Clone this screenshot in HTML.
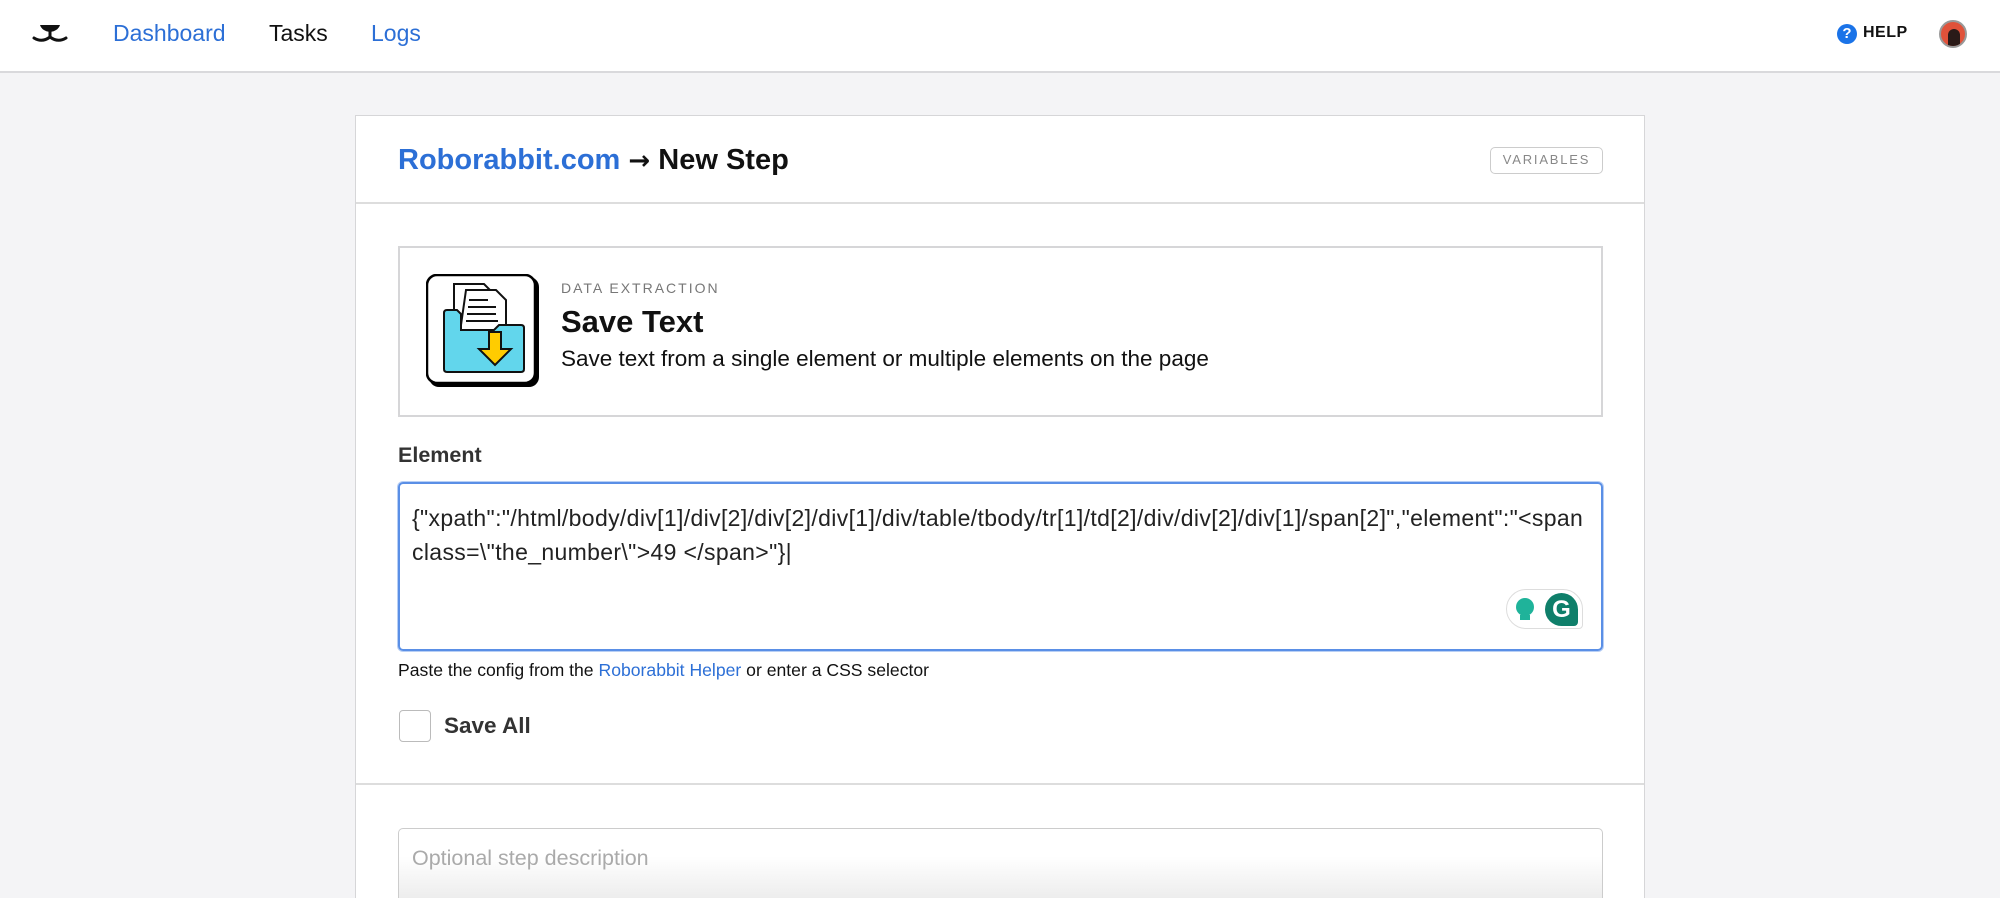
<!DOCTYPE html>
<html style="overflow:hidden;height:898px"><head><meta charset="utf-8"><style>
*{box-sizing:border-box;margin:0;padding:0}
body{width:2000px;height:898px;overflow:hidden;background:#f4f4f6;font-family:"Liberation Sans",sans-serif;color:#111}
#wrap{position:relative;width:2000px;height:898px;overflow:hidden}
.abs{position:absolute;white-space:nowrap}
.top{position:absolute;left:0;top:0;width:2000px;height:73px;background:#fff;border-bottom:2px solid #d9d9dc}
.card{position:absolute;left:355px;top:115px;width:1290px;height:783px;background:#fff;border:1.5px solid #d6d6d8;border-bottom:none;overflow:hidden}
</style></head><body><div id="wrap">
<div class="top">
<svg class="abs" style="left:31px;top:23px" width="38" height="24" viewBox="0 0 38 24"><path d="M9 2 h20 q-2 6 -10 7 q-8 -1 -10 -7z" fill="#111"/><path d="M19 8 v6 q-8 6 -16 1 M19 14 q8 6 16 1" fill="none" stroke="#111" stroke-width="3" stroke-linecap="round"/></svg>
<div class="abs" style="left:113px;top:20px;font-size:23px;color:#2c6fd6">Dashboard</div>
<div class="abs" style="left:269px;top:20px;font-size:23px;color:#111">Tasks</div>
<div class="abs" style="left:371px;top:20px;font-size:23px;color:#2c6fd6">Logs</div>
<div class="abs" style="left:1837px;top:24px;width:20px;height:20px;border-radius:50%;background:#1a73e8;color:#fff;font-size:15px;font-weight:bold;text-align:center;line-height:20px">?</div>
<div class="abs" style="left:1863px;top:24px;font-size:16px;font-weight:bold;letter-spacing:0.5px">HELP</div>
<div class="abs" style="left:1939px;top:20px;width:28px;height:28px;border-radius:50%;background:#e0523a;border:2px solid #999;overflow:hidden"><div style="position:absolute;left:7px;top:7px;width:12px;height:20px;border-radius:6px 6px 0 0;background:#2a1a18"></div></div>
</div>
<div class="card">
<div class="abs" style="left:42px;top:28px;font-size:29px;font-weight:bold"><span style="color:#2c6fd6">Roborabbit.com</span> <span style="font-family:'DejaVu Sans',sans-serif;font-size:26px">→</span> New Step</div>
<div class="abs" style="left:1134px;top:31px;width:113px;height:27px;border:1.5px solid #ccc;border-radius:5px;font-size:13px;letter-spacing:1.8px;color:#888;text-align:center;line-height:24px">VARIABLES</div>
<div style="position:absolute;left:0;top:86px;width:100%;height:2px;background:#ddd"></div>
<div style="position:absolute;left:42px;top:130px;width:1205px;height:171px;border:2px solid #d6d6d8"></div>
<svg class="abs" style="left:70px;top:158px" width="116" height="116" viewBox="0 0 116 116">
<rect x="3" y="3" width="110" height="110" rx="10" fill="#000"/><rect x="1" y="1" width="108" height="108" rx="10" fill="#fff" stroke="#000" stroke-width="2.5"/>
<path d="M28 10h30l8 8v50H28z" fill="#fff" stroke="#111" stroke-width="2"/>
<path d="M40 16h30l10 10v46H32z" fill="#fff" stroke="#111" stroke-width="2"/>
<g stroke="#111" stroke-width="2"><line x1="43" y1="26" x2="62" y2="26"/><line x1="42" y1="33" x2="70" y2="33"/><line x1="41" y1="40" x2="70" y2="40"/><line x1="40" y1="47" x2="72" y2="47"/></g>
<path d="M18 39q0-3 3-3h10l4 4v16h33l5-5h22q3 0 3 3v41q0 3-3 3H21q-3 0-3-3z" fill="#62d6ec" stroke="#111" stroke-width="2"/>
<path d="M63 58h12v17h10l-16 16-16-16h10z" fill="#ffcc00" stroke="#111" stroke-width="2"/>
</svg>
<div class="abs" style="left:205px;top:164px;font-size:14px;letter-spacing:2px;color:#777">DATA EXTRACTION</div>
<div class="abs" style="left:205px;top:188px;font-size:31px;font-weight:bold">Save Text</div>
<div class="abs" style="left:205px;top:230px;font-size:22.5px">Save text from a single element or multiple elements on the page</div>
<div class="abs" style="left:42px;top:327px;font-size:21.5px;font-weight:bold;color:#333">Element</div>
<div style="position:absolute;left:42px;top:366px;width:1205px;height:169px;border:2px solid #5a8fe6;border-radius:5px;box-shadow:0 0 0 1px #b8cff5"></div>
<div class="abs" style="left:56px;top:385px;font-size:23px;line-height:34px;letter-spacing:0.35px;color:#222">{"xpath":"/html/body/div[1]/div[2]/div[2]/div[1]/div/table/tbody/tr[1]/td[2]/div/div[2]/div[1]/span[2]","element":"&lt;span<br>class=\"the_number\"&gt;49 &lt;/span&gt;"}|</div>
<div class="abs" style="left:1150px;top:473px;width:77px;height:40px;border:1.5px solid #ddd;border-radius:20px 20px 4px 20px;background:#fff"></div>
<div class="abs" style="left:1160px;top:482px;width:18px;height:18px;border-radius:50%;background:#1fb39a"></div>
<div class="abs" style="left:1164px;top:499px;width:10px;height:5px;background:#1fb39a"></div>
<div class="abs" style="left:1189px;top:477px;width:33px;height:33px;border-radius:50% 50% 4px 50%;background:#0f7f6a;color:#fff;font-weight:bold;font-size:24px;text-align:center;line-height:33px">G</div>
<div class="abs" style="left:42px;top:544px;font-size:17.6px;color:#111">Paste the config from the <span style="color:#2c6fd6">Roborabbit Helper</span> or enter a CSS selector</div>
<div class="abs" style="left:43px;top:594px;width:32px;height:32px;border:1.5px solid #bbb;border-radius:4px"></div>
<div class="abs" style="left:88px;top:597px;font-size:22.5px;font-weight:bold;color:#333">Save All</div>
<div style="position:absolute;left:0;top:667px;width:100%;height:2px;background:#ddd"></div>
<div style="position:absolute;left:42px;top:712px;width:1205px;height:70px;border:1.5px solid #ccc;border-bottom:none;border-radius:5px 5px 0 0;background:linear-gradient(#fff,#fff 40%,#ededed)"></div>
<div class="abs" style="left:56px;top:730px;font-size:21.5px;color:#aaa">Optional step description</div>
</div>
</div></body></html>
